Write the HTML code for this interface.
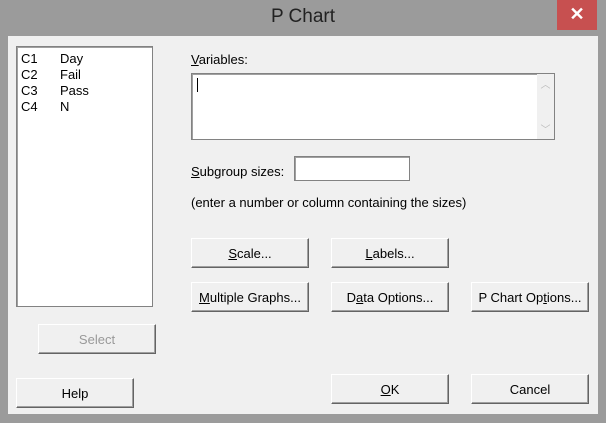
<html><head><style>
body{margin:0;width:606px;height:423px;background:#9b9b9b;font-family:"Liberation Sans",sans-serif;font-size:13px;color:#000;position:relative;overflow:hidden}
.a{position:absolute}
.client{left:8px;top:36px;width:590px;height:378px;background:#f0f0f0}
.btn{position:absolute;background:#f0f0f0;border-top:1px solid #fff;border-left:1px solid #fff;border-right:1px solid #646464;border-bottom:1px solid #646464;box-shadow:inset -1px -1px 0 #a0a0a0;text-align:center;line-height:30px;height:28px;width:116px}
.box{position:absolute;background:#fff;border:1px solid #828282;box-shadow:inset 1px 1px 0 #a0a0a0}
u{text-decoration:underline}
</style></head><body>
<div class="a" style="left:0;top:6px;width:606px;text-align:center;font-size:19px;color:#222">P Chart</div>
<div class="a" style="left:557px;top:0;width:40px;height:30px;background:#c75050;color:#fff;text-align:center;font-size:18px;line-height:28px;font-weight:bold">✕</div>
<div class="a client"></div>
<div class="box" style="left:16px;top:46px;width:135px;height:259px">
<div style="position:absolute;left:4px;top:4px;line-height:16px">C1<br>C2<br>C3<br>C4</div>
<div style="position:absolute;left:43px;top:4px;line-height:16px">Day<br>Fail<br>Pass<br>N</div>
</div>
<div class="a" style="left:191px;top:52px"><u>V</u>ariables:</div>
<div class="box" style="left:191px;top:73px;width:362px;height:65px">
<div style="position:absolute;left:5px;top:4px;width:1px;height:14px;background:#000"></div>
<div style="position:absolute;right:0;top:0;width:17px;height:65px;background:#f0f0f0;color:#bbb;font-size:10px;text-align:center"><div style="margin-top:2px">︿</div><div style="margin-top:30px">﹀</div></div>
</div>
<div class="a" style="left:191px;top:164px"><u>S</u>ubgroup sizes:</div>
<div class="box" style="left:294px;top:156px;width:114px;height:23px"></div>
<div class="a" style="left:191px;top:195px">(enter a number or column containing the sizes)</div>
<div class="btn" style="left:191px;top:238px"><u>S</u>cale...</div>
<div class="btn" style="left:331px;top:238px"><u>L</u>abels...</div>
<div class="btn" style="left:191px;top:282px"><u>M</u>ultiple Graphs...</div>
<div class="btn" style="left:331px;top:282px">D<u>a</u>ta Options...</div>
<div class="btn" style="left:471px;top:282px">P Chart Op<u>t</u>ions...</div>
<div class="btn" style="left:38px;top:324px;color:#999">Select</div>
<div class="btn" style="left:16px;top:378px">Help</div>
<div class="btn" style="left:331px;top:374px"><u>O</u>K</div>
<div class="btn" style="left:471px;top:374px">Cancel</div>
</body></html>
